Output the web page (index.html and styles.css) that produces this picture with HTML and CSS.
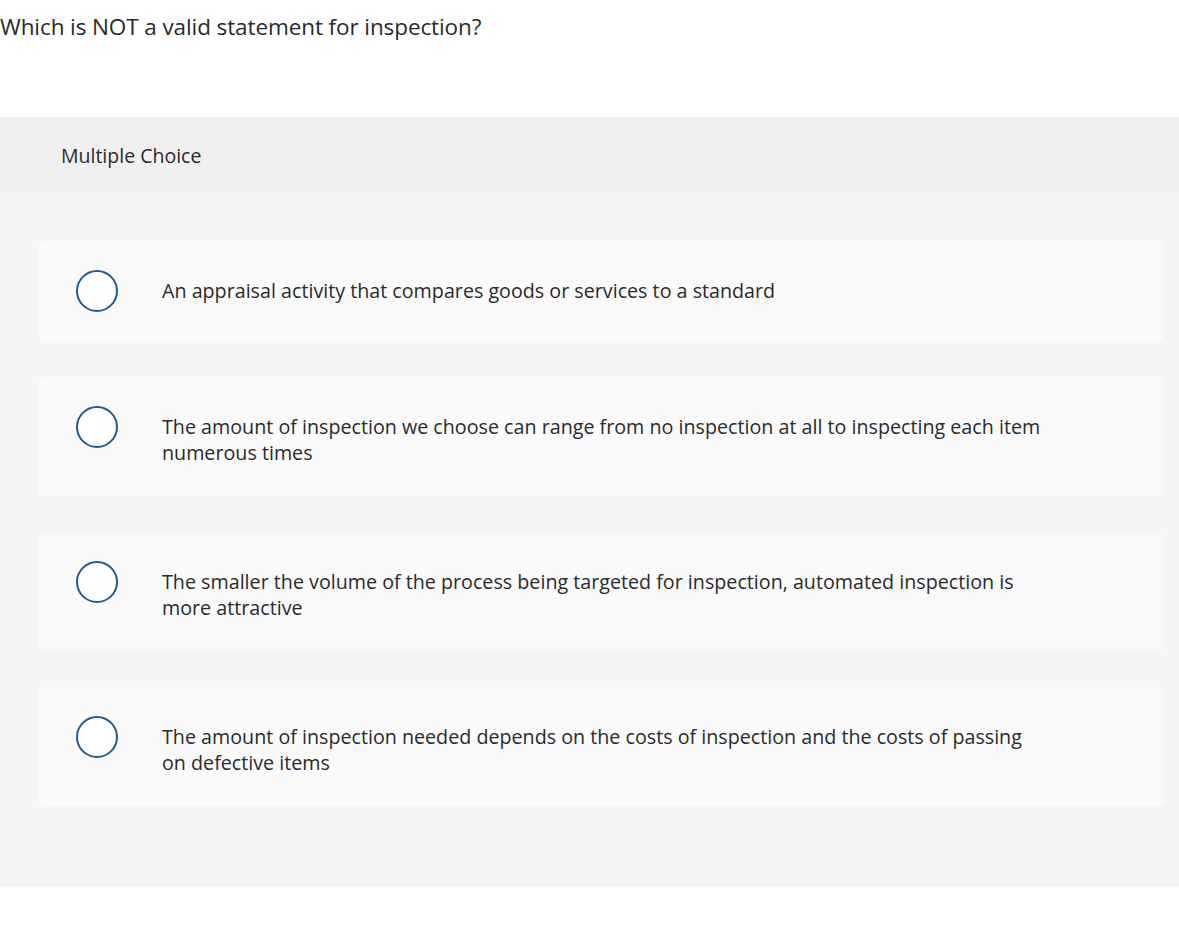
FILE: index.html
```html
<!DOCTYPE html>
<html lang="en">
<head>
    <meta charset="UTF-8">
    <meta name="viewport" content="width=device-width, initial-scale=1.0">
    <title>Multiple Choice</title>
    <link rel="stylesheet" href="styles.css">
</head>
<body>
    <div id="question">
        <p class="prompt">Which is NOT a valid statement for inspection?</p>
    </div>

    <div class="choices">
        <div class="choices-header">Multiple Choice</div>
        <div class="choices-body">
            <label class="choice">
                <span class="radio"></span>
                <span class="choice-text">An appraisal activity that compares goods or services to a standard</span>
            </label>
            <label class="choice">
                <span class="radio"></span>
                <span class="choice-text">The amount of inspection we choose can range from no inspection at all to inspecting each item numerous times</span>
            </label>
            <label class="choice">
                <span class="radio"></span>
                <span class="choice-text">The smaller the volume of the process being targeted for inspection, automated inspection is more attractive</span>
            </label>
            <label class="choice">
                <span class="radio"></span>
                <span class="choice-text">The amount of inspection needed depends on the costs of inspection and the costs of passing on defective items</span>
            </label>
        </div>
    </div>
</body>
</html>
```

FILE: styles.css
```css
body {
    margin: 0;
    font-family: "Open Sans", Lato, Arial, sans-serif;
    color: #2a2a2a;
    background: #fff;
}

#question {
    height: 117px;
}

.prompt {
    margin: 0;
    padding-top: 13px;
    font-size: 22.5px;
    line-height: 28px;
    letter-spacing: -0.1px;
}

.choices {
    background: #f5f5f5;
    border-radius: 0 0 0 4px;
    overflow: hidden;
}

.choices-header {
    background: #f0f0f0;
    height: 76px;
    padding-left: 61px;
    font-size: 19.5px;
    line-height: 78px;
}

.choices-body {
    display: flex;
    flex-direction: column;
    gap: 36px;
    padding: 48px 15px 81px 38px;
}

.choice {
    display: flex;
    align-items: flex-start;
    background: #fafafa;
    border-radius: 6px;
    padding: 29px 0 29px 38px;
    cursor: pointer;
}

.radio {
    flex: none;
    width: 38px;
    height: 38px;
    border: 2px solid #1f5b8f;
    border-radius: 50%;
    background: #fff;
}

.choice-text {
    margin: 8px 0 1px 44px;
    max-width: 885px;
    font-size: 19.7px;
    line-height: 26px;
}
```
